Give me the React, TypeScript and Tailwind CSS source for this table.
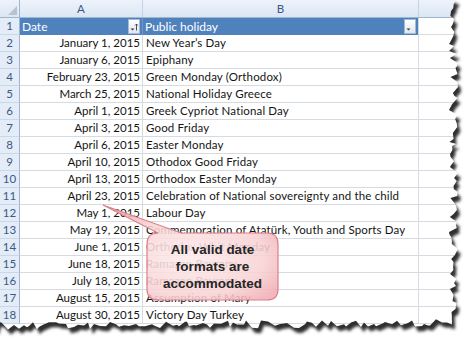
import React from "react";

type Holiday = { date: string; name: string };

const holidays: Holiday[] = [
  { date: "January 1, 2015", name: "New Year\u2019s Day" },
  { date: "January 6, 2015", name: "Epiphany" },
  { date: "February 23, 2015", name: "Green Monday (Orthodox)" },
  { date: "March 25, 2015", name: "National Holiday Greece" },
  { date: "April 1, 2015", name: "Greek Cypriot National Day" },
  { date: "April 3, 2015", name: "Good Friday" },
  { date: "April 6, 2015", name: "Easter Monday" },
  { date: "April 10, 2015", name: "Othodox Good Friday" },
  { date: "April 13, 2015", name: "Orthodox Easter Monday" },
  { date: "April 23, 2015", name: "Celebration of National sovereignty and the child" },
  { date: "May 1, 2015", name: "Labour Day" },
  { date: "May 19, 2015", name: "Commemoration of Atatürk, Youth and Sports Day" },
  { date: "June 1, 2015", name: "Orthodox Whit Monday" },
  { date: "June 18, 2015", name: "Ramazan Bayramı" },
  { date: "July 18, 2015", name: "Ramazan Bayramı" },
  { date: "August 15, 2015", name: "Assumption of Mary" },
  { date: "August 30, 2015", name: "Victory Day Turkey" },
];

// torn paper edge, seeded so it is the same on every render
let seed = 11;
const rand = () => {
  seed = (seed * 16807) % 2147483647;
  return seed / 2147483647;
};
const edge: [number, number][] = [];
for (let y = -6; y <= 316; y += 2 + Math.floor(rand() * 5)) {
  edge.push([449 + rand() * 9, y]);
}
for (let x = 452; x >= -6; x -= 2 + Math.floor(rand() * 6)) {
  edge.push([x, 319 + rand() * 8 + ((452 - x) / 452) * 3]);
}
const sheetPoly =
  `M -10 -10 L ${edge[0][0]} -10 ` +
  edge.map(([x, y]) => `L ${x.toFixed(1)} ${y.toFixed(1)}`).join(" ") +
  ` L -10 ${edge[edge.length - 1][1].toFixed(1)} Z`;

function FilterButton({ sort }: { sort?: boolean }) {
  return (
    <div className="w-[12px] h-[15px] bg-gradient-to-b from-white to-[#dfe7f1] border border-[#a7bad2] flex items-end justify-center">
      <svg width="10" height="13" viewBox="0 0 10 13">
        <path d="M1.5 8.5 L5.5 8.5 L3.5 10.5 Z" fill="#3c3c3c" />
        {sort && <path d="M7.5 4 L7.5 10.5 M6 5.5 L7.5 4 L9 5.5" stroke="#3c3c3c" strokeWidth="0.9" fill="none" />}
      </svg>
    </div>
  );
}

export default function App() {
  return (
    <div className="relative w-[474px] h-[348px] overflow-hidden bg-white text-[11.5px] leading-[16px] text-[#141414] font-['Lato','Noto_Sans',sans-serif]">
      {/* column letters */}
      <div className="grid grid-cols-[20px_123px_276px_76px] h-[18px] bg-gradient-to-b from-[#eef3fa] to-[#dbe6f4] border-b border-[#9eb6ce] text-[#3b5a82]">
        <div className="border-r border-[#9eb6ce] flex items-end justify-end p-[2px]">
          <svg width="9" height="9" viewBox="0 0 9 9">
            <path d="M9 0 L9 9 L0 9 Z" fill="#b9c3cf" />
          </svg>
        </div>
        <div className="border-r border-[#c3d3e8] flex items-center justify-center">A</div>
        <div className="border-r border-[#c3d3e8] flex items-center justify-center">B</div>
        <div className="flex items-center justify-center">C</div>
      </div>

      {/* table header row */}
      <div className="grid grid-cols-[20px_123px_276px_76px] h-[17px]">
        <div className="bg-[#e4ecf7] border-r border-[#9eb6ce] border-b border-b-[#c9d7ea] text-center text-[#3b5a82]">1</div>
        <div className="bg-[#4f81bd] border-r border-[#6d96c9] flex items-center justify-between pl-[2px] pr-[2px] text-white text-[12px]">
          <span>Date</span>
          <FilterButton sort />
        </div>
        <div className="bg-[#4f81bd] border-r border-[#d0d7e5] flex items-center justify-between pl-[2px] pr-[2px] text-white text-[12px]">
          <span>Public holiday</span>
          <FilterButton />
        </div>
        <div className="border-b border-[#dadcdd]" />
      </div>

      {holidays.map((h, i) => (
        <div key={i} className="grid grid-cols-[20px_123px_276px_76px] h-[17px]">
          <div className="bg-[#e4ecf7] border-r border-[#9eb6ce] border-b border-b-[#c9d7ea] text-center text-[#3b5a82]">{i + 2}</div>
          <div className="border-r border-b border-[#d6dbe2] text-right pr-[2px] whitespace-nowrap">{h.date}</div>
          <div className="border-r border-b border-[#d6dbe2] pl-[3px] whitespace-nowrap tracking-[0.15px]">{h.name}</div>
          <div className="border-b border-[#d6dbe2]" />
        </div>
      ))}

      {/* callout */}
      <svg className="absolute left-0 top-0 pointer-events-none" width="474" height="348">
        <defs>
          <radialGradient id="calloutFill" cx="0.5" cy="0.55" r="0.6">
            <stop offset="0" stopColor="#fdecec" />
            <stop offset="0.7" stopColor="#f8d2d4" />
            <stop offset="1" stopColor="#f0aeb3" />
          </radialGradient>
        </defs>
        <path
          d="M158 233 L103 205 L181 233 L267 233 Q278 233 278 244 L278 289 Q278 300 267 300 L158 300 Q147 300 147 289 L147 244 Q147 233 158 233 Z"
          fill="url(#calloutFill)"
          fillOpacity="0.88"
          stroke="#de8089"
          strokeWidth="1.2"
        />
      </svg>
      <div className="absolute left-[147px] top-[241px] w-[131px] text-center font-['Liberation_Sans',Arial,sans-serif] font-bold text-[13.5px] leading-[17px] text-[#262626]">
        All valid date
        <br />
        formats are
        <br />
        accommodated
      </div>

      {/* torn edges */}
      <svg className="absolute left-0 top-0 pointer-events-none" width="474" height="348">
        <defs>
          <filter id="tearBlur" x="-10%" y="-10%" width="120%" height="120%">
            <feGaussianBlur stdDeviation="1.7" />
          </filter>
          <mask id="outsideMask">
            <rect x="0" y="0" width="474" height="348" fill="white" />
            <path d={sheetPoly} fill="black" />
          </mask>
        </defs>
        <path d={`M0 0 H474 V348 H0 Z ${sheetPoly}`} fill="white" fillRule="evenodd" />
        <g mask="url(#outsideMask)">
          <path d={sheetPoly} transform="translate(3 5)" fill="#2f2f2f" filter="url(#tearBlur)" />
        </g>
      </svg>
    </div>
  );
}
